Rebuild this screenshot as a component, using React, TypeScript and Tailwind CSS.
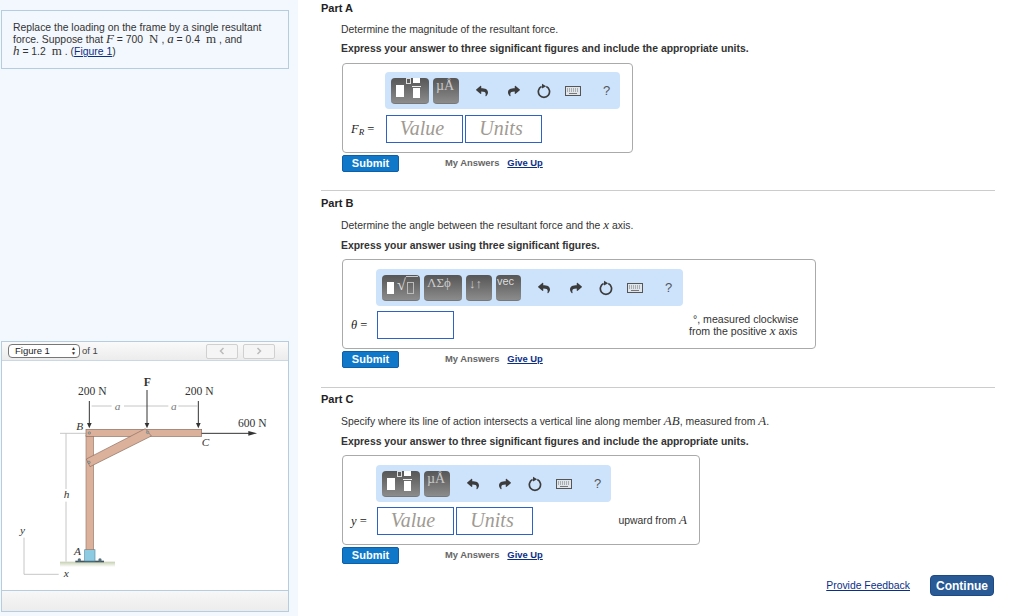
import React from "react";
import { FaReply, FaShare } from "react-icons/fa";

const serif = "font-['Liberation_Serif',serif]";

// Small math pieces, set in a serif like the original
function M({ children }: { children: React.ReactNode }) {
  return <span className={`${serif} italic text-[13px] leading-[0px]`}>{children}</span>;
}

function Unit({ children }: { children: React.ReactNode }) {
  return <span className={`${serif} text-[13px] leading-[0px] mx-[3px]`}>{children}</span>;
}

// ---------------------------------------------------------
// Toolbar
// ---------------------------------------------------------
function ToolButton({ width, children }: { width: string; children: React.ReactNode }) {
  return (
    <div
      className={`${width} relative h-[26px] shrink-0 overflow-hidden rounded-[4px] bg-gradient-to-b from-[#565656] to-[#8c8c8c] border-b border-[#777]`}
    >
      {children}
    </div>
  );
}

function TemplateButton() {
  return (
    <ToolButton width="w-[38px]">
      <div className="absolute left-[5px] top-[7px] h-[12px] w-[8px] bg-white" />
      <div className="absolute left-[15px] top-0 h-[6px] w-[5px] border border-[#ddd]" />
      <div className="absolute left-[22px] top-0 h-[5px] w-[7px] bg-white" />
      <div className="absolute left-[21px] top-[8px] h-px w-[9px] bg-[#eee]" />
      <div className="absolute left-[22px] top-[10px] h-[10px] w-[7px] bg-white" />
    </ToolButton>
  );
}

function UnitButton() {
  return (
    <ToolButton width="w-[26px]">
      <span className={`${serif} absolute left-[3px] -top-[3px] text-[14px] text-[#c8c8c8]`}>µÅ</span>
    </ToolButton>
  );
}

function SymbolButtons() {
  return (
    <>
      <ToolButton width="w-[38px]">
        <div className="absolute left-[5px] top-[7px] h-[12px] w-[7px] bg-white" />
        <span className={`${serif} absolute left-[15px] -top-[2px] text-[16px] text-[#ddd]`}>√</span>
        <div className="absolute left-[24px] top-[1px] h-px w-[12px] bg-[#ccc]" />
        <div className="absolute left-[25px] top-[7px] h-[12px] w-[7px] border border-[#bbb]" />
      </ToolButton>
      <ToolButton width="w-[38px]">
        <span className={`${serif} absolute left-[3px] -top-[2px] text-[13px] text-[#ccc]`}>ΛΣϕ</span>
      </ToolButton>
      <ToolButton width="w-[26px]">
        <span className={`${serif} absolute left-[3px] -top-[1px] text-[13px] font-bold text-[#ccc]`}>↓↑</span>
      </ToolButton>
      <ToolButton width="w-[25px]">
        <span className="absolute left-[1px] -top-[2px] text-[11px] text-[#ddd]">vec</span>
      </ToolButton>
    </>
  );
}

function RefreshIcon() {
  return (
    <svg width="14" height="16" viewBox="0 0 14 16" fill="none">
      <path d="M9.3 3.6A5.6 5.6 0 1 1 4.6 3.6" stroke="#3c3c3c" strokeWidth="1.7" />
      <path d="M5 0.8 L9.2 3.3 L5 5.6 Z" fill="#3c3c3c" />
    </svg>
  );
}

function KeyboardIcon() {
  return (
    <svg width="16" height="10" viewBox="0 0 16 10">
      <rect x="0.5" y="0.5" width="15" height="9" fill="#dfe5ea" stroke="#555" />
      <path d="M2 3h12M2 5h12" stroke="#777" strokeWidth="1" strokeDasharray="1 1" />
      <path d="M4 7.5h8" stroke="#777" />
    </svg>
  );
}

function Toolbar({ children, width, left }: { children: React.ReactNode; width: string; left: string }) {
  return (
    <div className={`${width} ${left} flex h-[37px] items-center rounded-[4px] bg-[#cde3fc] pl-[6px]`}>
      <div className="flex items-center gap-[4px]">{children}</div>
      <div className="ml-[16px] flex items-center text-[#3c3c3c]">
        <div className="flex w-[14px] justify-center"><FaReply size={12} /></div>
        <div className="ml-[18px] flex w-[14px] justify-center"><FaShare size={12} /></div>
        <div className="ml-[16px] flex w-[14px] justify-center"><RefreshIcon /></div>
        <div className="ml-[14px] flex w-[16px] justify-center"><KeyboardIcon /></div>
        <div className="ml-[22px] text-[13px] leading-none text-[#555]">?</div>
      </div>
    </div>
  );
}

// ---------------------------------------------------------
// Answer boxes
// ---------------------------------------------------------
function AnswerInput({ placeholder }: { placeholder?: string }) {
  return (
    <div className={`flex h-[28px] w-[77px] items-center justify-center border border-[#2f62c4] bg-white ${serif} pb-[3px] pr-[5px] text-[20px] italic text-[#a09a92]`}>
      {placeholder}
    </div>
  );
}

function AnswerActions() {
  return (
    <div className="mt-[2px] flex h-[17px] items-center">
      <button className="h-[17px] w-[57px] rounded-[2px] border border-[#0f5fa8] bg-[#0f78c9] text-[11px] font-bold leading-none text-white">
        Submit
      </button>
      <span className="ml-[46px] text-[9.4px] font-bold text-[#666]">My Answers</span>
      <a className="ml-[8px] text-[9.4px] font-bold text-[#0b2f86] underline">Give Up</a>
    </div>
  );
}

function PartHeader({ title }: { title: string }) {
  return <h2 className="text-[11px] font-bold leading-[14px] text-[#222]">{title}</h2>;
}

function Prompt({ children, strong, top, gap }: { children: React.ReactNode; strong: string; top: string; gap: string }) {
  return (
    <div className="ml-[20px] text-[10.4px] leading-[14px] text-[#333]">
      <p className={top}>{children}</p>
      <p className={`${gap} font-bold`}>{strong}</p>
    </div>
  );
}

function AnswerBox({ width, children }: { width: string; children: React.ReactNode }) {
  return (
    <div className={`${width} h-[90px] rounded-[4px] border border-[#aaa] bg-white pt-[8px]`}>{children}</div>
  );
}

function PartA() {
  return (
    <section className="h-[190px] pt-px">
      <PartHeader title="Part A" />
      <Prompt top="mt-[8px]" gap="mt-[5px]" strong="Express your answer to three significant figures and include the appropriate units.">
        Determine the magnitude of the resultant force.
      </Prompt>
      <div className="ml-[21px] mt-[7px]">
        <AnswerBox width="w-[291px]">
          <Toolbar width="w-[235px]" left="ml-[42px]">
            <TemplateButton />
            <UnitButton />
          </Toolbar>
          <div className="mt-[6px] flex items-center">
            <div className={`${serif} w-[43px] pl-[8px] text-[12.5px] text-[#222]`}>
              <i>F</i><sub className="text-[9px] italic">R</sub> =
            </div>
            <AnswerInput placeholder="Value" />
            <div className="ml-[2px]"><AnswerInput placeholder="Units" /></div>
          </div>
        </AnswerBox>
        <AnswerActions />
      </div>
    </section>
  );
}

function PartB() {
  return (
    <section className="mt-[5px] h-[191px]">
      <PartHeader title="Part B" />
      <Prompt top="mt-[9px]" gap="mt-[6px]" strong="Express your answer using three significant figures.">
        Determine the angle between the resultant force and the <M>x</M> axis.
      </Prompt>
      <div className="ml-[21px] mt-[6px]">
        <AnswerBox width="w-[474px]">
          <Toolbar width="w-[307px]" left="ml-[33px] mt-px">
            <SymbolButtons />
          </Toolbar>
          <div className="mt-[5px] flex items-center">
            <div className={`${serif} w-[34px] pl-[8px] text-[12.5px] text-[#222]`}><i>θ</i> =</div>
            <AnswerInput />
            <div className="ml-auto mr-[14px] w-[112px] text-[10.6px] leading-[12px] text-[#333]">
              <span className="ml-[4px]">°, measured clockwise</span>
              <br />
              from the positive <M>x</M> axis
            </div>
          </div>
        </AnswerBox>
        <AnswerActions />
      </div>
    </section>
  );
}

function PartC() {
  return (
    <section className="mt-[4px]">
      <PartHeader title="Part C" />
      <Prompt top="mt-[9px]" gap="mt-[6px]" strong="Express your answer to three significant figures and include the appropriate units.">
        Specify where its line of action intersects a vertical line along member <M>AB</M>, measured from <M>A</M>.
      </Prompt>
      <div className="ml-[21px] mt-[6px]">
        <AnswerBox width="w-[358px]">
          <Toolbar width="w-[235px]" left="ml-[33px] mt-px">
            <TemplateButton />
            <UnitButton />
          </Toolbar>
          <div className="mt-[5px] flex items-center">
            <div className={`${serif} w-[34px] pl-[8px] text-[12.5px] text-[#222]`}><i>y</i> =</div>
            <AnswerInput placeholder="Value" />
            <div className="ml-[2px]"><AnswerInput placeholder="Units" /></div>
            <div className="ml-auto mr-[12px] text-[10.4px] text-[#333]">
              upward from <M>A</M>
            </div>
          </div>
        </AnswerBox>
        <AnswerActions />
      </div>
    </section>
  );
}

// ---------------------------------------------------------
// Figure
// ---------------------------------------------------------
function ForceArrow({ x, y1, y2 }: { x: number; y1: number; y2: number }) {
  return (
    <g>
      <line x1={x} y1={y1} x2={x} y2={y2 - 12} stroke="#333" strokeWidth="3" />
      <path d={`M${x - 7} ${y2 - 16} L${x + 7} ${y2 - 16} L${x} ${y2} Z`} fill="#333" />
    </g>
  );
}

function FrameDrawing() {
  const label = { fontFamily: "Liberation Serif, serif", fill: "#333" };
  return (
    <svg width="286" height="230" viewBox="6 78 858 690">
      <defs>
        <linearGradient id="ground" x1="0" y1="0" x2="0" y2="1">
          <stop offset="0" stopColor="#c4ceb0" />
          <stop offset="1" stopColor="#ffffff" />
        </linearGradient>
      </defs>
      {/* dimension lines */}
      <g stroke="#aaa" strokeWidth="2" fill="none">
        <line x1="180" y1="295" x2="258" y2="295" />
        <line x1="198" y1="296" x2="198" y2="462" />
        <line x1="198" y1="500" x2="198" y2="680" />
        <line x1="275" y1="213" x2="335" y2="213" />
        <line x1="372" y1="213" x2="505" y2="213" />
        <line x1="535" y1="213" x2="592" y2="213" />
        <line x1="72" y1="608" x2="72" y2="718" />
        <line x1="72" y1="718" x2="176" y2="718" />
      </g>
      {/* ground and base */}
      <rect x="180" y="680" width="165" height="16" fill="url(#ground)" />
      <rect x="226" y="677" width="86" height="5" fill="#3f5560" />
      <circle cx="238" cy="675" r="5" fill="#56707c" />
      <circle cx="300" cy="675" r="5" fill="#56707c" />
      <rect x="254" y="644" width="31" height="34" fill="#8ccbe2" stroke="#5d8ea3" strokeWidth="2" />
      {/* frame */}
      <rect x="258" y="300" width="23" height="344" fill="#dcb19c" stroke="#9a7d6e" strokeWidth="2" />
      <rect x="258" y="283" width="347" height="21" fill="#dcb19c" stroke="#8a6d5e" strokeWidth="2" />
      <path d="M259 372 L436 281 L454 303 L270 395 Z" fill="#dcb19c" stroke="#8a6d5e" strokeWidth="2" />
      <circle cx="268" cy="294" r="4" fill="#9aa" stroke="#555" />
      <circle cx="267" cy="382" r="4" fill="#9aa" stroke="#555" />
      <circle cx="443" cy="292" r="4" fill="#9aa" stroke="#555" />
      {/* forces */}
      <ForceArrow x={268} y1={198} y2={280} />
      <ForceArrow x={441} y1={165} y2={280} />
      <ForceArrow x={595} y1={198} y2={280} />
      <line x1="605" y1="295" x2="750" y2="295" stroke="#333" strokeWidth="3" />
      <path d="M745 288 L771 295 L745 302 Z" fill="#333" />
      {/* labels */}
      <g {...label} fontSize="35">
        <text x="234" y="181" textLength="86" lengthAdjust="spacingAndGlyphs">200 N</text>
        <text x="555" y="181" textLength="86" lengthAdjust="spacingAndGlyphs">200 N</text>
        <text x="714" y="276" textLength="86" lengthAdjust="spacingAndGlyphs">600 N</text>
        <text x="431" y="152" fontWeight="bold">F</text>
      </g>
      <g {...label} fontSize="34" fontStyle="italic">
        <text x="229" y="284">B</text>
        <text x="605" y="334">C</text>
        <text x="222" y="660">A</text>
        <text x="191" y="490">h</text>
        <text x="344" y="226" fill="#777">a</text>
        <text x="513" y="226" fill="#777">a</text>
        <text x="60" y="596">y</text>
        <text x="191" y="726">x</text>
      </g>
    </svg>
  );
}

function PagerButton({ path }: { path: string }) {
  return (
    <div className="flex h-[15px] w-[32px] items-center justify-center rounded-[2px] border border-[#d0d0d0] bg-[#f5f5f5]">
      <svg width="6" height="8" viewBox="0 0 6 8" fill="none">
        <path d={path} stroke="#bbb" strokeWidth="1.5" />
      </svg>
    </div>
  );
}

function FigurePanel() {
  return (
    <div className="mt-auto mb-[4px] ml-px w-[288px] border border-[#b6cde0] bg-white">
      <div className="flex h-[19px] items-center border-b border-[#c9d8e4] bg-gradient-to-b from-[#fafafa] to-[#ececec] pl-[6px]">
        <div className="flex h-[14px] w-[72px] items-center justify-between rounded-[4px] border border-[#777] bg-white pl-[6px] pr-[3px] text-[9.5px] text-[#222]">
          Figure 1
          <span className="flex flex-col text-[5px] leading-[5px] text-[#333]">
            <span>▲</span>
            <span>▼</span>
          </span>
        </div>
        <span className="ml-[2px] text-[9.5px] text-[#444]">of 1</span>
        <div className="ml-auto mr-[13px] flex gap-[5px]">
          <PagerButton path="M4.5 1 L1.5 4 L4.5 7" />
          <PagerButton path="M1.5 1 L4.5 4 L1.5 7" />
        </div>
      </div>
      <div className="h-[229px]"><FrameDrawing /></div>
      <div className="h-[21px] border-t border-[#b6cde0] bg-gradient-to-b from-[#f7f7f7] to-[#ececec]" />
    </div>
  );
}

export default function App() {
  return (
    <div className="flex h-[616px] w-[1014px] overflow-hidden bg-white font-['Liberation_Sans',sans-serif]">
      {/* Left column: statement and figure */}
      <aside className="flex w-[298px] shrink-0 flex-col bg-[#f3f8fe]">
        <div className="mt-[10px] ml-px h-[59px] w-[288px] border border-[#b6cde0] px-[11px] pt-[11px] text-[10.4px] leading-[12px] text-[#333]">
          Replace the loading on the frame by a single resultant
          <br />
          force. Suppose that <M>F</M> = 700 <Unit>N</Unit>, <M>a</M> = 0.4 <Unit>m</Unit>, and
          <br />
          <M>h</M> = 1.2 <Unit>m</Unit>. (<a className="text-[#0b2f86] underline">Figure 1</a>)
        </div>
        <FigurePanel />
      </aside>

      {/* Right column: the three parts */}
      <main className="ml-[23px] w-[674px]">
        <PartA />
        <div className="h-px bg-[#ccc]" />
        <PartB />
        <div className="h-px bg-[#ccc]" />
        <PartC />
        <div className="mt-[11px] flex items-center justify-end pr-px">
          <a className="text-[10.4px] text-[#0b2f86] underline">Provide Feedback</a>
          <button className="ml-[20px] h-[21px] w-[64px] rounded-[4px] border border-[#1d4a84] bg-[#2a5a96] text-[12px] font-bold leading-none text-white">
            Continue
          </button>
        </div>
      </main>
    </div>
  );
}
